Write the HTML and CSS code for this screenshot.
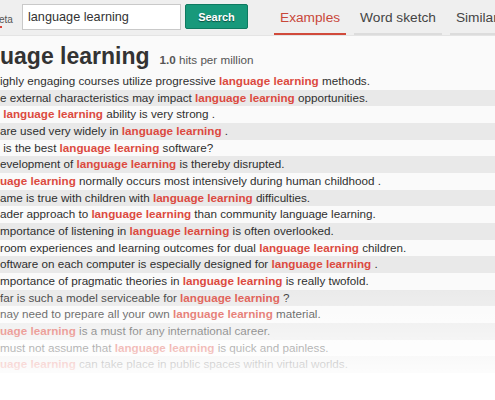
FILE: index.html
```html
<!DOCTYPE html>
<html lang="en">
<head>
  <meta charset="UTF-8">
  <meta name="viewport" content="width=device-width, initial-scale=1.0">
  <title>SkELL - language learning</title>
  <link rel="stylesheet" href="styles.css">
</head>
<body>
  <header class="topbar">
    <div class="brand"><span class="beta">eta</span></div>
    <form class="search">
      <input type="text" class="query" value="language learning">
      <button type="submit" class="search-btn">Search</button>
    </form>
    <nav class="tabs">
      <a class="tab active" href="#">Examples</a>
      <a class="tab" href="#">Word sketch</a>
      <a class="tab" href="#">Similar words</a>
    </nav>
  </header>

  <main class="results">
    <div class="title-row">
      <h1>uage learning</h1>
      <span class="freq"><b>1.0</b> hits per million</span>
    </div>

    <ul class="examples">
      <li>ighly engaging courses utilize progressive <em>language learning</em> methods.</li>
      <li>e external characteristics may impact <em>language learning</em> opportunities.</li>
      <li>&nbsp;<em>language learning</em> ability is very strong .</li>
      <li>are used very widely in <em>language learning</em> .</li>
      <li>&nbsp;is the best <em>language learning</em> software?</li>
      <li>evelopment of <em>language learning</em> is thereby disrupted.</li>
      <li><em>uage learning</em> normally occurs most intensively during human childhood .</li>
      <li>ame is true with children with <em>language learning</em> difficulties.</li>
      <li>ader approach to <em>language learning</em> than community language learning.</li>
      <li>mportance of listening in <em>language learning</em> is often overlooked.</li>
      <li>room experiences and learning outcomes for dual <em>language learning</em> children.</li>
      <li>oftware on each computer is especially designed for <em>language learning</em> .</li>
      <li>mportance of pragmatic theories in <em>language learning</em> is really twofold.</li>
      <li>far is such a model serviceable for <em>language learning</em> ?</li>
      <li>nay need to prepare all your own <em>language learning</em> material.</li>
      <li><em>uage learning</em> is a must for any international career.</li>
      <li>must not assume that <em>language learning</em> is quick and painless.</li>
      <li><em>uage learning</em> can take place in public spaces within virtual worlds.</li>
    </ul>

    <div class="fade"></div>
  </main>
</body>
</html>
```

FILE: styles.css
```css
* {
  box-sizing: border-box;
}

body {
  margin: 0;
  font-family: "Liberation Sans", Arial, sans-serif;
  background: #fff;
  color: #333;
  overflow: hidden;
}

/* top bar */
.topbar {
  display: flex;
  align-items: flex-start;
  height: 36px;
  background: #efefef;
  border-bottom: 1px solid #e4e4e4;
  white-space: nowrap;
}

.brand {
  width: 22px;
  flex-shrink: 0;
  padding-top: 14px;
  font-size: 10px;
  color: #555;
}

.beta {
  display: inline-block;
  position: relative;
  margin-left: -1px;
}

.beta::after {
  content: "";
  position: absolute;
  left: 0;
  top: 12px;
  width: 3px;
  height: 2px;
  background: #d9453b;
}

.search {
  display: flex;
  gap: 4px;
  margin: 4px 0 0;
}

.query {
  width: 159px;
  height: 26px;
  padding: 0 5px;
  border: 1px solid #c9c9c9;
  background: #fff;
  font-family: inherit;
  font-size: 12.7px;
  color: #333;
  outline: none;
}

.search-btn {
  width: 63px;
  height: 25px;
  border: 1px solid #0f7a60;
  border-radius: 2px;
  background: #18997b;
  color: #fff;
  font-family: inherit;
  font-size: 11px;
  font-weight: bold;
  text-shadow: 0 1px 1px rgba(0, 0, 0, 0.5);
  cursor: pointer;
}

.tabs {
  display: flex;
  gap: 8px;
  margin-left: 26px;
  align-self: flex-end;
}

.tab {
  display: block;
  padding: 9px 6px 6px;
  line-height: 18px;
  font-size: 13.7px;
  color: #444;
  text-decoration: none;
  border-bottom: 2px solid #dcdcdc;
}

.tab.active {
  color: #c9473a;
  border-bottom-color: #d14a3b;
}

/* results */
.results {
  position: relative;
  background: #fafafa;
  white-space: nowrap;
}

.title-row {
  display: flex;
  align-items: baseline;
  gap: 10px;
  padding-top: 6px;
}

h1 {
  margin: 0;
  font-size: 23px;
  line-height: 28px;
  color: #333;
}

.freq {
  font-size: 11.67px;
  color: #555;
}

.examples {
  list-style: none;
  margin: 3px 0 0;
  padding: 0;
}

.examples li {
  height: 16.67px;
  line-height: 16.67px;
  font-size: 11.67px;
  color: #2f2f2f;
}

.examples li:nth-child(even) {
  background: #e9e9e9;
}

.examples em {
  font-style: normal;
  font-weight: bold;
  color: #dc4a3f;
}

.fade {
  position: absolute;
  left: 0;
  right: 0;
  top: 248px;
  height: 104px;
  background: linear-gradient(rgba(255, 255, 255, 0), rgba(255, 255, 255, 0.88) 85%, #fff);
}
```
